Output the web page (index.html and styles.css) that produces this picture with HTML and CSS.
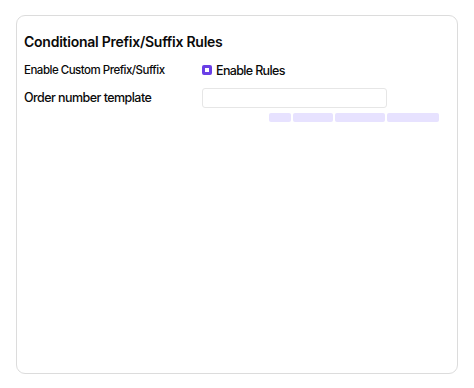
FILE: index.html
```html
<!DOCTYPE html>
<html>
<head>
<meta charset="utf-8">
<link rel="stylesheet" href="styles.css">
</head>
<body>
<div class="card">
  <h2 class="title">Conditional Prefix/Suffix Rules</h2>
  <div class="form">
    <div class="label small">Enable Custom Prefix/Suffix</div>
    <label class="check">
      <span class="box"></span>
      <span class="check-text">Enable Rules</span>
    </label>
    <div class="label">Order number template</div>
    <div class="control">
      <div class="input"></div>
      <div class="tokens">
        <span class="token t1"></span>
        <span class="token t2"></span>
        <span class="token t3"></span>
        <span class="token t4"></span>
      </div>
    </div>
  </div>
</div>
</body>
</html>
```
FILE: styles.css
```css
html, body {
  margin: 0;
  padding: 0;
  background: #fff;
}
body {
  font-family: Inter, "Noto Sans", sans-serif;
  color: #0a0a0a;
  padding: 15px 16px 14px 16px;
}
.card {
  box-sizing: border-box;
  width: 442px;
  height: 359px;
  border: 1.5px solid #dcdcdc;
  border-radius: 9px;
  padding: 16px 0 0 7px;
}
.title {
  margin: 0;
  font-size: 14px;
  font-weight: 600;
  line-height: 20px;
  letter-spacing: -0.25px;
}
.form {
  display: grid;
  grid-template-columns: 178px 1fr;
  margin-top: 8px;
  row-gap: 8px;
  align-items: start;
}
.label {
  font-size: 12.5px;
  font-weight: 500;
  line-height: 20px;
  letter-spacing: -0.55px;
}
.label.small {
  font-size: 11.5px;
  letter-spacing: -0.5px;
}
.check {
  display: flex;
  align-items: center;
  gap: 4px;
  height: 20px;
}
.box {
  box-sizing: border-box;
  width: 10px;
  height: 10px;
  border: 3px solid #6a3fe6;
  border-radius: 2px;
  background: #fff;
}
.check-text {
  font-size: 12.5px;
  font-weight: 500;
  letter-spacing: -0.65px;
}
.control {
  display: flex;
  flex-direction: column;
}
.input {
  box-sizing: border-box;
  width: 185px;
  height: 20px;
  border: 1px solid #e6e6e6;
  border-radius: 3px;
}
.tokens {
  display: flex;
  gap: 2px;
  margin-top: 5px;
  margin-left: 67px;
}
.token {
  height: 9px;
  background: #e7e2ff;
  border-radius: 2px;
}
.t1 { width: 22px; }
.t2 { width: 40px; }
.t3 { width: 50px; }
.t4 { width: 52px; }
```
